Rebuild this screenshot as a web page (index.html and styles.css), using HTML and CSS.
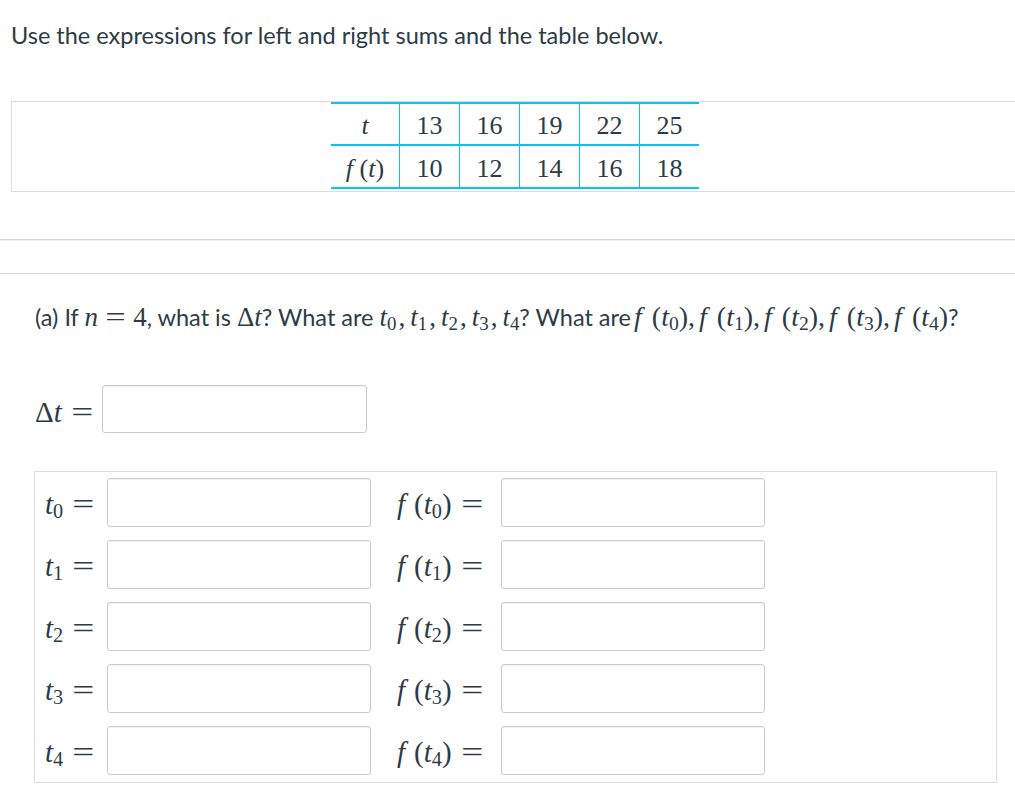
FILE: index.html
```
<!DOCTYPE html>
<html>
<head>
<meta charset="utf-8">
<link rel="stylesheet" href="styles.css">
</head>
<body>
<p class="title">Use the expressions for left and right sums and the table below.</p>

<div class="table-box">
  <table class="data">
    <tr class="r1">
      <td class="head"><span class="mi">t</span></td>
      <td>13</td><td>16</td><td>19</td><td>22</td><td>25</td>
    </tr>
    <tr class="r2">
      <td class="head"><span class="mi">f</span> (<span class="mi">t</span>)</td>
      <td>10</td><td>12</td><td>14</td><td>16</td><td>18</td>
    </tr>
  </table>
</div>

<div class="rule rule-a"></div>
<div class="rule rule-b"></div>

<p class="question">(a) If <span class="m"><span class="mi">n</span><span class="eq">=</span>4</span>, what is <span class="m">Δ<span class="mi">t</span></span>? What are <span class="m t-list"><span class="mi">t</span><sub>0</sub><span class="cm">,</span><span class="mi">t</span><sub>1</sub><span class="cm">,</span><span class="mi">t</span><sub>2</sub><span class="cm">,</span><span class="mi">t</span><sub>3</sub><span class="cm">,</span><span class="mi">t</span><sub>4</sub></span>? What are<span class="m fl-list"><span class="mi fn">f</span>(<span class="mi">t</span><sub>0</sub>)<span class="fc">,</span><span class="mi fn">f</span>(<span class="mi">t</span><sub>1</sub>)<span class="fc">,</span><span class="mi fn">f</span>(<span class="mi">t</span><sub>2</sub>)<span class="fc">,</span><span class="mi fn">f</span>(<span class="mi">t</span><sub>3</sub>)<span class="fc">,</span><span class="mi fn">f</span>(<span class="mi">t</span><sub>4</sub>)</span>?</p>

<div class="delta-row">
  <span class="lbl delta-lbl m">Δ<span class="mi">t</span><span class="eq">=</span></span>
  <span class="field wide"></span>
</div>

<div class="answers">
  <div class="arow">
    <span class="lbl tl m"><span class="mi">t</span><sub>0</sub><span class="eq">=</span></span>
    <span class="field"></span>
    <span class="lbl fl m"><span class="mi fn">f</span>(<span class="mi">t</span><sub>0</sub>)<span class="eq eq-f">=</span></span>
    <span class="field"></span>
  </div>
  <div class="arow">
    <span class="lbl tl m"><span class="mi">t</span><sub>1</sub><span class="eq">=</span></span>
    <span class="field"></span>
    <span class="lbl fl m"><span class="mi fn">f</span>(<span class="mi">t</span><sub>1</sub>)<span class="eq eq-f">=</span></span>
    <span class="field"></span>
  </div>
  <div class="arow">
    <span class="lbl tl m"><span class="mi">t</span><sub>2</sub><span class="eq">=</span></span>
    <span class="field"></span>
    <span class="lbl fl m"><span class="mi fn">f</span>(<span class="mi">t</span><sub>2</sub>)<span class="eq eq-f">=</span></span>
    <span class="field"></span>
  </div>
  <div class="arow">
    <span class="lbl tl m"><span class="mi">t</span><sub>3</sub><span class="eq">=</span></span>
    <span class="field"></span>
    <span class="lbl fl m"><span class="mi fn">f</span>(<span class="mi">t</span><sub>3</sub>)<span class="eq eq-f">=</span></span>
    <span class="field"></span>
  </div>
  <div class="arow">
    <span class="lbl tl m"><span class="mi">t</span><sub>4</sub><span class="eq">=</span></span>
    <span class="field"></span>
    <span class="lbl fl m"><span class="mi fn">f</span>(<span class="mi">t</span><sub>4</sub>)<span class="eq eq-f">=</span></span>
    <span class="field"></span>
  </div>
</div>
</body>
</html>
```
FILE: styles.css
```
html, body {
  margin: 0;
  padding: 0;
  overflow: hidden;
  background: #ffffff;
}
body {
  font-family: Lato, "Open Sans", sans-serif;
  color: #2d3b45;
  width: 1015px;
}
.title {
  margin: 0;
  padding: 21px 0 0 11px;
  font-size: 23.5px;
  line-height: 28px;
}
.table-box {
  margin: 52px 0 0 11px;
  width: 1006px;
  border: 1px solid #dcdcdc;
  display: flex;
  justify-content: center;
  padding-bottom: 2px;
}
.data {
  border-collapse: separate;
  border-spacing: 0;
  font-family: "Liberation Serif", "Times New Roman", serif;
  font-size: 26px;
  color: #2d3b45;
}
.data td {
  padding: 0;
  text-align: center;
  width: 59px;
  border-left: 1px solid #0cc2ef;
  border-bottom: 2px solid #0cc2ef;
}
.data td.head {
  width: 68px;
  border-left: none;
}
.data .r1 td {
  border-top: 2px solid #0cc2ef;
  height: 36px;
  padding-top: 4px;
  line-height: 36px;
}
.data .r2 td {
  height: 38px;
  padding-top: 3px;
  line-height: 37px;
}
.mi {
  font-style: italic;
}
.rule {
  height: 0;
  border-top: 1px solid #dadada;
}
.rule-a {
  margin-top: 47px;
  border-bottom: 1px solid #f0f0f0;
}
.rule-b {
  margin-top: 32px;
}
.question {
  margin: 26px 0 0 35px;
  font-size: 23.5px;
  line-height: 34px;
  white-space: nowrap;
}
.m {
  font-family: "Liberation Serif", "Times New Roman", serif;
  font-size: 27px;
  line-height: 1;
}
.m sub {
  font-style: normal;
  font-size: 0.7em;
  line-height: 1;
  vertical-align: -4px;
}
.fn {
  margin-right: 9px;
}
.fl-list {
  margin-left: 3px;
  font-size: 28px;
}
.fl-list .fn {
  margin-right: 10px;
}
.fc {
  margin-right: 4px;
}
.cm {
  margin: 0 5px 0 2px;
}
.eq {
  display: inline-block;
  font-style: normal;
  margin: 0 5px 0 12px;
  transform: scaleX(1.35);
}
.question .eq {
  margin: 0 10px 0 10px;
}
.delta-row {
  display: flex;
  align-items: center;
  margin: 51px 0 0 35px;
}
.delta-lbl {
  width: 67px;
  padding-top: 6px;
  font-size: 28px;
}
.field {
  display: block;
  box-sizing: border-box;
  width: 264px;
  height: 49px;
  border: 1px solid #cbcbcb;
  border-radius: 3px;
  background: #fff;
  box-shadow: inset 0 1px 1px rgba(0, 0, 0, 0.06);
}
.field.wide {
  width: 265px;
  height: 48px;
}
.answers {
  box-sizing: border-box;
  margin: 38px 0 0 34px;
  width: 963px;
  border: 1px solid #dcdcdc;
  padding: 6px 0 7px 10px;
  display: flex;
  flex-direction: column;
  gap: 13px;
}
.arow {
  display: flex;
  align-items: center;
}
.lbl {
  display: block;
  white-space: nowrap;
  padding-top: 6px;
  font-size: 29px;
}
.tl {
  width: 62px;
}
.fl {
  width: 104px;
  margin-left: 26px;
}
.eq-f {
  margin-left: 12px;
}
```
